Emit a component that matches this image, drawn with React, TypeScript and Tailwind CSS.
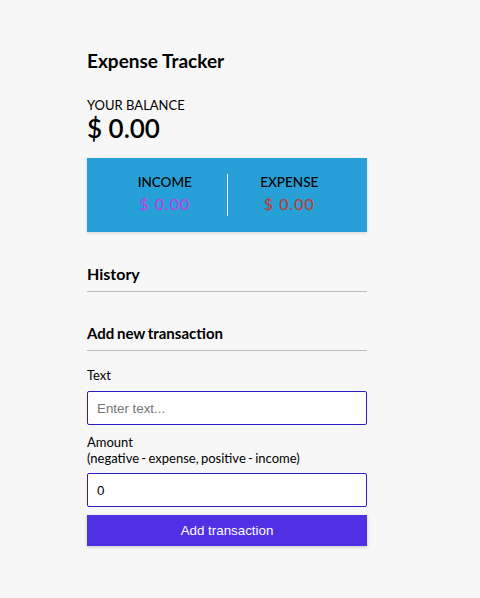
import React from "react";

export default function App() {
  return (
    <div className="min-h-[598px] w-full bg-[#f7f7f7] font-['Lato',sans-serif] text-black">
      <div className="ml-[87px] w-[280px] pt-[49px]">
        <h2 className="text-[19px] font-bold leading-[24px]">Expense Tracker</h2>
        <div className="mt-[24px]">
          <h4 className="text-[13px] font-normal uppercase leading-[16px]">Your Balance</h4>
          <h1 className="text-[26px] font-semibold leading-[30px]">$ 0.00</h1>
        </div>
        <div className="mt-[15px] flex h-[74px] items-center px-[16px] pb-[4px] bg-[#279fd7] shadow-[0_1px_3px_rgba(0,0,0,0.15)]">
          <div className="flex flex-1 flex-col items-center">
            <h4 className="text-[13.5px] font-medium uppercase leading-[18px]">Income</h4>
            <p className="mt-[3px] text-[16px] font-normal leading-[20px] tracking-[1px] text-[#c43be8]">$ 0.00</p>
          </div>
          <div className="mt-[4px] h-[42px] w-px bg-white" />
          <div className="flex flex-1 flex-col items-center">
            <h4 className="text-[13.5px] font-medium uppercase leading-[18px]">Expense</h4>
            <p className="mt-[3px] text-[16px] font-normal leading-[20px] tracking-[1px] text-[#c0392b]">$ 0.00</p>
          </div>
        </div>
        <h3 className="mt-[32px] border-b border-[#bbbbbb] pb-[7px] text-[16px] font-bold leading-[20px]">History</h3>
        <div className="h-[31px]" />
        <h3 className="border-b border-[#bbbbbb] pb-[7px] text-[15px] font-bold leading-[20px] [word-spacing:-1px]">Add new transaction</h3>
        <form className="mt-[16px]" onSubmit={(e) => e.preventDefault()}>
          <label className="block text-[13px] leading-[17px]">Text</label>
          <input
            type="text"
            placeholder="Enter text..."
            className="mt-[7px] block h-[34px] w-full rounded-[2px] border border-[#2a1ec4] bg-white px-[9px] font-['Liberation_Sans',Arial,sans-serif] text-[13.33px] outline-none placeholder:text-[#757575]"
          />
          <label className="mt-[9px] block text-[13px] leading-[16px] [word-spacing:-1px]">
            Amount
            <br />
            (negative - expense, positive - income)
          </label>
          <input
            type="number"
            defaultValue={0}
            className="mt-[7px] block h-[34px] w-full rounded-[2px] border border-[#2a1ec4] bg-white px-[9px] font-['Liberation_Sans',Arial,sans-serif] text-[13.33px] outline-none"
          />
          <button className="mt-[8px] block h-[31px] w-full bg-[#5030e5] font-['Liberation_Sans',Arial,sans-serif] text-[13.33px] text-white shadow-[0_1px_3px_rgba(0,0,0,0.2)]">
            Add transaction
          </button>
        </form>
      </div>
    </div>
  );
}
